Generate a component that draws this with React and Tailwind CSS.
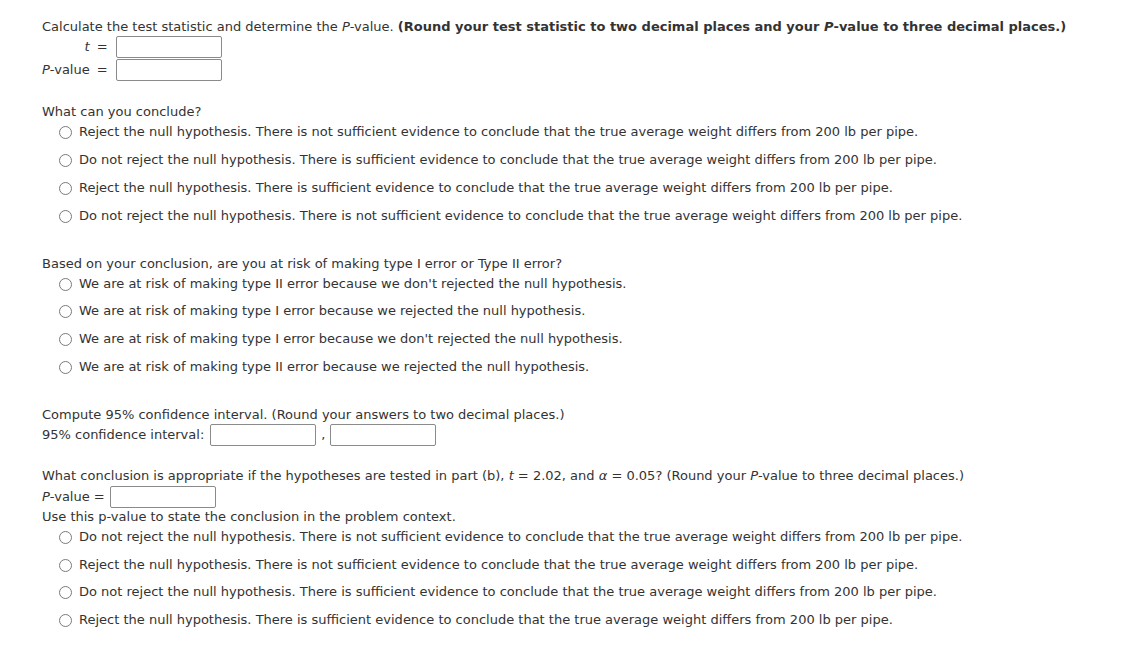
const firstOptions = [
    "Reject the null hypothesis. There is not sufficient evidence to conclude that the true average weight differs from 200 lb per pipe.",
    "Do not reject the null hypothesis. There is sufficient evidence to conclude that the true average weight differs from 200 lb per pipe.",
    "Reject the null hypothesis. There is sufficient evidence to conclude that the true average weight differs from 200 lb per pipe.",
    "Do not reject the null hypothesis. There is not sufficient evidence to conclude that the true average weight differs from 200 lb per pipe.",
];

const errorOptions = [
    "We are at risk of making type II error because we don't rejected the null hypothesis.",
    "We are at risk of making type I error because we rejected the null hypothesis.",
    "We are at risk of making type I error because we don't rejected the null hypothesis.",
    "We are at risk of making type II error because we rejected the null hypothesis.",
];

const lastOptions = [
    "Do not reject the null hypothesis. There is not sufficient evidence to conclude that the true average weight differs from 200 lb per pipe.",
    "Reject the null hypothesis. There is not sufficient evidence to conclude that the true average weight differs from 200 lb per pipe.",
    "Do not reject the null hypothesis. There is sufficient evidence to conclude that the true average weight differs from 200 lb per pipe.",
    "Reject the null hypothesis. There is sufficient evidence to conclude that the true average weight differs from 200 lb per pipe.",
];

function Box({className = ""}) {
    return (<input type="text"
                   className={"h-[22px] w-[106px] border border-[#8a8a8a] rounded-[2px] bg-white outline-none " + className}/>)
}

// gaps: list of top margins for each option after the first
function RadioList({options, name, gaps}) {
    return (<div className="flex flex-col pl-[17px]">
        {options.map((text, i) => (<label key={i} className={"flex items-center h-[20px] " + (i > 0 ? gaps[i - 1] : "")}>
            <span className="w-[13px] h-[13px] rounded-full border border-[#7a7a7a] bg-white mr-[7px] shrink-0"/>
            <input type="radio" name={name} className="hidden"/>
            <span>{text}</span>
        </label>))}
    </div>)
}

export default function App() {
    return (<div
        className="min-h-[659px] bg-white text-[#333] text-[13px] leading-[20px] pt-[17px] pl-[42px]"
        style={{fontFamily: "'DejaVu Sans', Verdana, sans-serif"}}>

        <div>
            Calculate the test statistic and determine the <i>P</i>-value. <b>(Round your test statistic to two
            decimal places and your <i>P</i>-value to three decimal places.)</b>
        </div>

        <div className="grid grid-cols-[auto_auto] w-max gap-y-[1px] items-center -mt-[1px]">
            <div className="text-right pr-[8px]"><i>t</i> <span className="ml-[3px]">=</span></div>
            <Box/>
            <div className="text-right pr-[8px]"><i>P</i>-value <span className="ml-[3px]">=</span></div>
            <Box/>
        </div>

        <div className="mt-[21px]">What can you conclude?</div>
        <RadioList options={firstOptions} name="conclude" gaps={["mt-[8px]", "mt-[8px]", "mt-[8px]"]}/>

        <div className="mt-[28px]">Based on your conclusion, are you at risk of making type I error or Type II error?</div>
        <RadioList options={errorOptions} name="error" gaps={["mt-[7px]", "mt-[8px]", "mt-[8px]"]}/>

        <div className="mt-[28px]">Compute 95% confidence interval. (Round your answers to two decimal places.)</div>
        <div className="flex items-center h-[21px] -mt-[1px]">
            <span className="mr-[6px]">95% confidence interval:</span>
            <Box/>
            <span className="mx-[5px]">,</span>
            <Box/>
        </div>

        <div className="mt-[21px]">
            What conclusion is appropriate if the hypotheses are tested in part (b), <i>t</i> = 2.02, and <i>α</i> = 0.05?
            (Round your <i>P</i>-value to three decimal places.)
        </div>
        <div className="flex items-center h-[21px]">
            <span className="mr-[5px]"><i>P</i>-value =</span>
            <Box/>
        </div>
        <div>Use this p-value to state the conclusion in the problem context.</div>
        <RadioList options={lastOptions} name="final" gaps={["mt-[8px]", "mt-[7px]", "mt-[8px]"]}/>
    </div>)
}
